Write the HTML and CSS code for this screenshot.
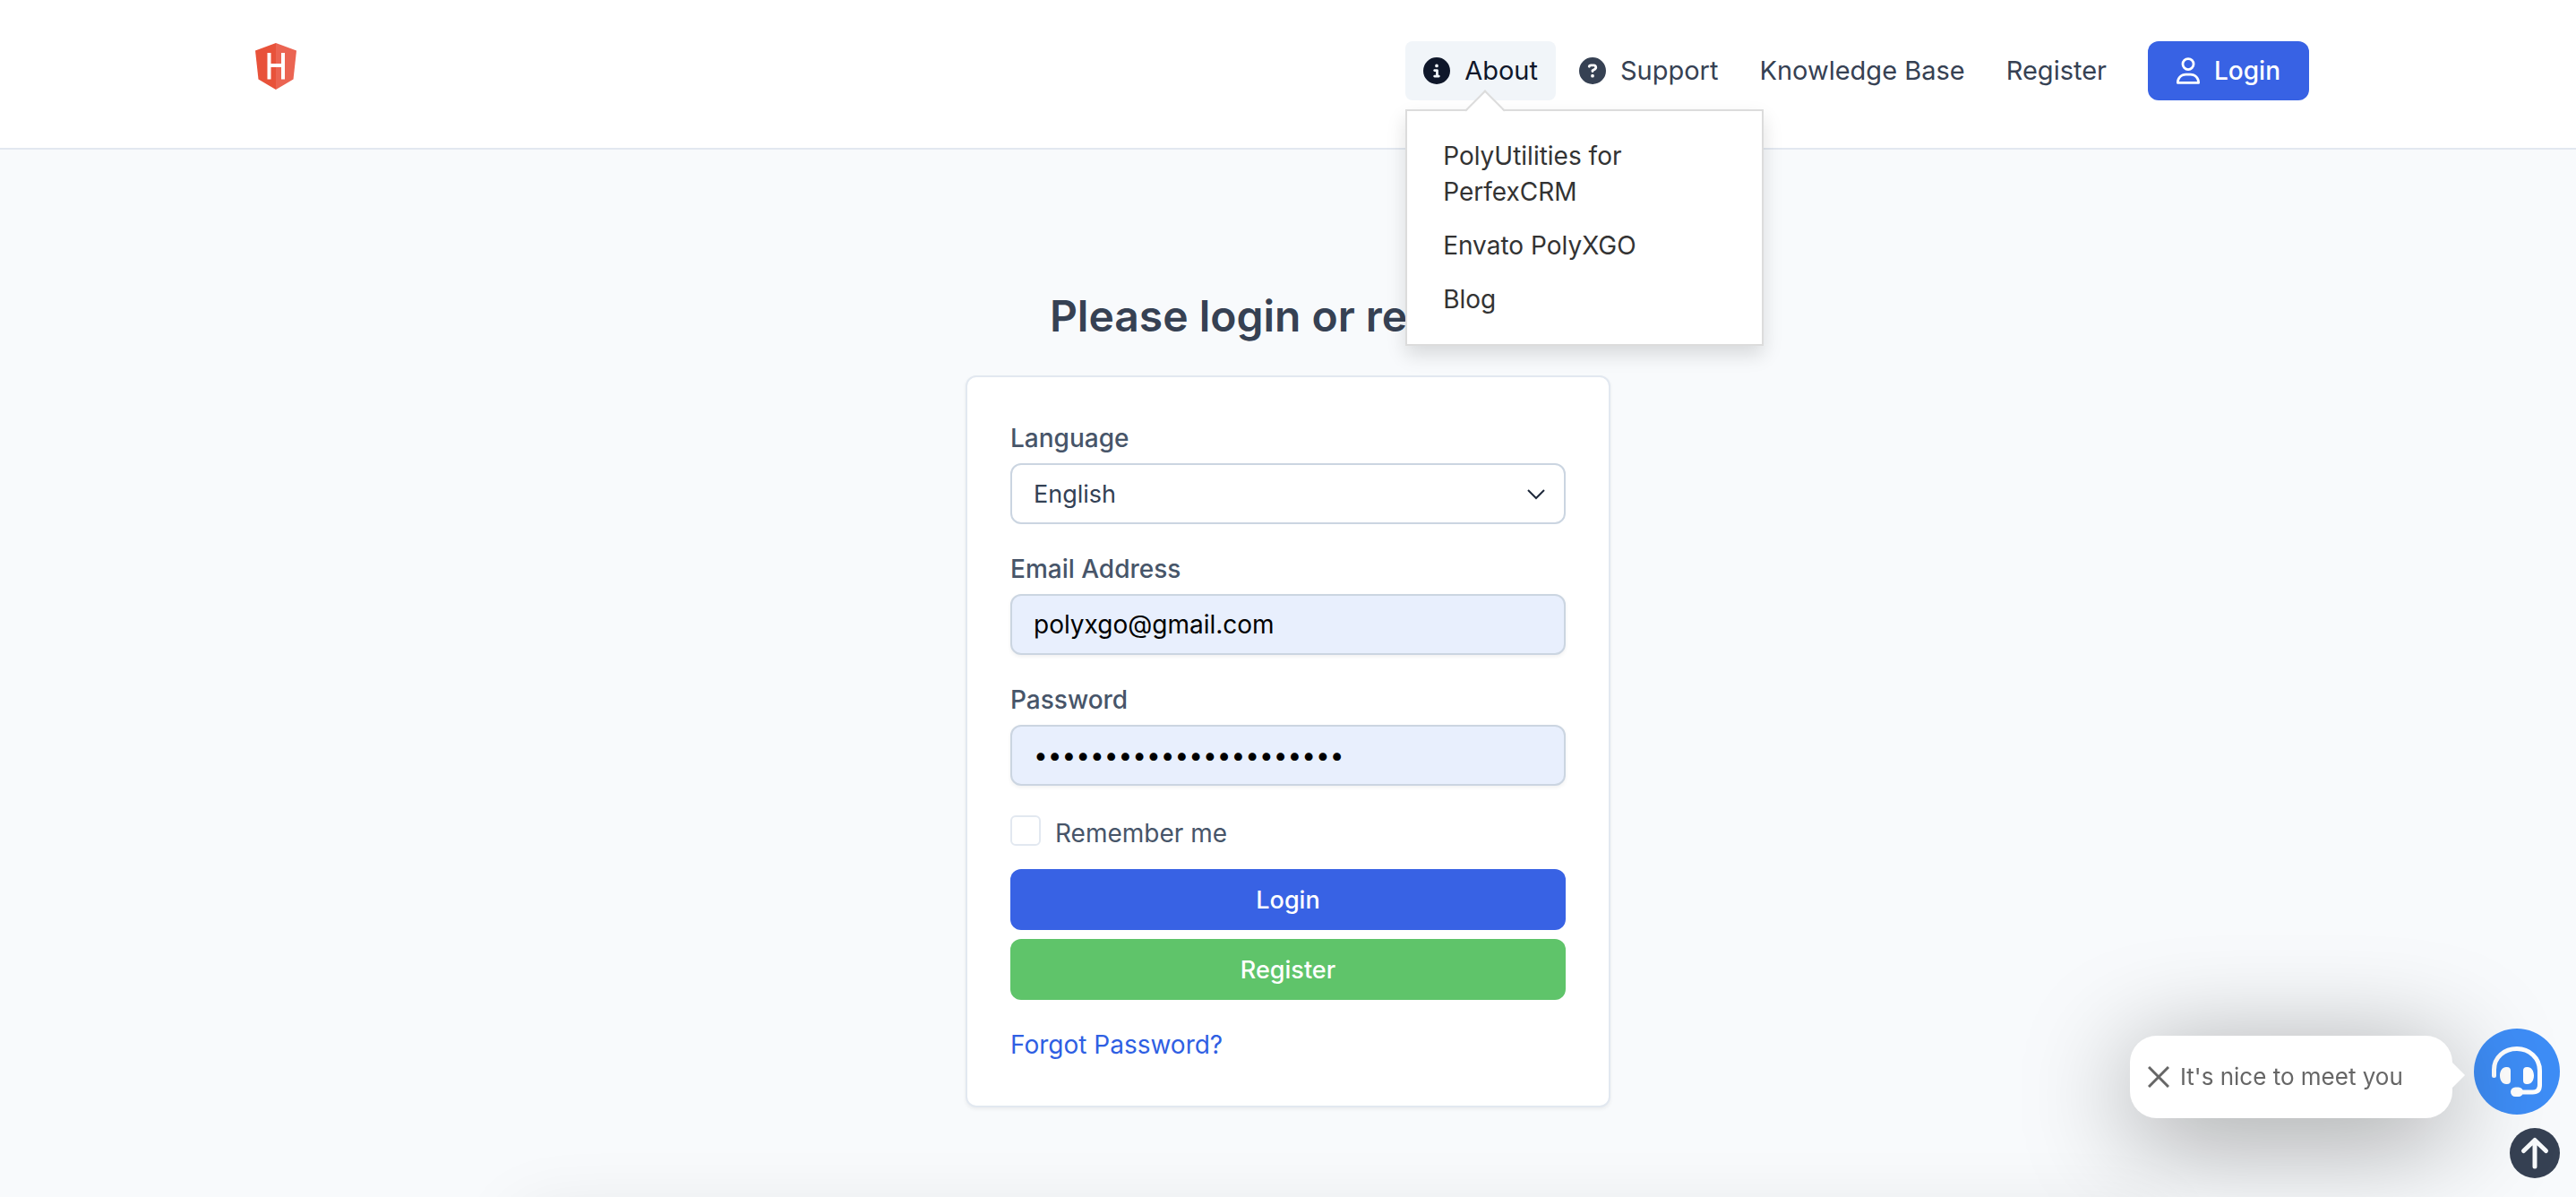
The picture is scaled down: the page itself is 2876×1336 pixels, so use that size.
FILE: index.html
```
<!DOCTYPE html>
<html lang="en">
<head>
    <meta charset="UTF-8">
    <meta name="viewport" content="width=device-width, initial-scale=1.0">
    <title>Login</title>
    <link rel="stylesheet" href="styles.css">
</head>
<body>
    <header class="header">
        <div class="container">
            <a href="#" class="logo" aria-label="Home">
                <svg viewBox="0 0 46 52" width="46" height="52">
                    <path fill="#e8523a" d="M23 0 0 8.500 3.500 40.500 23 52z"/>
                    <path fill="#eb6452" d="M23 0 46 8.500 42.500 40.500 23 52z"/>
                    <path fill="none" stroke="#fff" stroke-width="4" d="M15.500 11v29.500M31 11v29.500M15.500 25h15.500"/>
                </svg>
            </a>
            <nav>
                <ul class="menu">
                    <li class="menu-item">
                        <a href="#" class="menu-link active">
                            <svg viewBox="0 0 512 512" width="30" height="30"><path fill="currentColor" d="M256 512A256 256 0 1 0 256 0a256 256 0 1 0 0 512zM216 336h24V272H216c-13.300 0-24-10.700-24-24s10.700-24 24-24h48c13.300 0 24 10.700 24 24v88h8c13.300 0 24 10.700 24 24s-10.700 24-24 24H216c-13.300 0-24-10.700-24-24s10.700-24 24-24zm40-208a32 32 0 1 1 0 64 32 32 0 1 1 0-64z"/></svg>
                            About
                        </a>
                        <ul class="dropdown">
                            <li><a href="#">PolyUtilities for PerfexCRM</a></li>
                            <li><a href="#">Envato PolyXGO</a></li>
                            <li><a href="#">Blog</a></li>
                        </ul>
                    </li>
                    <li class="menu-item">
                        <a href="#" class="menu-link">
                            <svg viewBox="0 0 512 512" width="30" height="30"><path fill="currentColor" d="M256 512A256 256 0 1 0 256 0a256 256 0 1 0 0 512zM169.800 165.300c7.900-22.300 29.100-37.300 52.800-37.300h58.300c34.900 0 63.100 28.300 63.100 63.100c0 22.600-12.100 43.500-31.700 54.800L280 264.400c-.2 13-10.900 23.600-24 23.600c-13.300 0-24-10.700-24-24V250.500c0-8.600 4.600-16.500 12.100-20.800l44.300-25.400c4.700-2.700 7.600-7.700 7.600-13.100c0-8.400-6.800-15.100-15.100-15.100H222.600c-3.400 0-6.400 2.100-7.500 5.300l-.4 1.200c-4.400 12.500-18.200 19-30.600 14.600s-19-18.200-14.600-30.600l.4-1.200zM224 352a32 32 0 1 1 64 0 32 32 0 1 1 -64 0z"/></svg>
                            Support
                        </a>
                    </li>
                    <li class="menu-item"><a href="#" class="menu-link">Knowledge Base</a></li>
                    <li class="menu-item"><a href="#" class="menu-link">Register</a></li>
                    <li class="menu-item">
                        <a href="#" class="menu-login">
                            <svg viewBox="0 0 448 512" width="26" height="30"><path fill="currentColor" d="M304 128a80 80 0 1 0 -160 0 80 80 0 1 0 160 0zM96 128a128 128 0 1 1 256 0A128 128 0 1 1 96 128zM49.300 464H398.700c-8.900-63.300-63.300-112-129-112H178.300c-65.700 0-120.100 48.700-129 112zM0 482.300C0 383.800 79.800 304 178.300 304h91.400C368.200 304 448 383.800 448 482.300c0 16.400-13.300 29.700-29.700 29.700H29.700C13.300 512 0 498.700 0 482.300z"/></svg>
                            Login
                        </a>
                    </li>
                </ul>
            </nav>
        </div>
    </header>

    <main class="main">
        <h1 class="title">Please login or register</h1>
        <form class="card">
            <div class="form-group">
                <label for="language">Language</label>
                <div class="select-wrap">
                    <select id="language" class="form-control">
                        <option selected>English</option>
                    </select>
                    <svg class="chevron" viewBox="0 0 20 12" width="20" height="12"><path fill="none" stroke="#1e293b" stroke-width="2" d="M1 1l9 9 9-9"/></svg>
                </div>
            </div>
            <div class="form-group">
                <label for="email">Email Address</label>
                <input type="email" id="email" class="form-control filled" value="polyxgo@gmail.com">
            </div>
            <div class="form-group">
                <label for="password">Password</label>
                <input type="password" id="password" class="form-control filled" value="abcdefghijklmnopqrstuv">
            </div>
            <div class="remember">
                <input type="checkbox" id="remember">
                <label for="remember">Remember me</label>
            </div>
            <div class="actions">
                <button type="submit" class="btn btn-primary">Login</button>
                <button type="button" class="btn btn-success">Register</button>
            </div>
            <a href="#" class="forgot">Forgot Password?</a>
        </form>
    </main>

    <div class="bottom-shade"></div>

    <!-- Chat widget and back to top -->
    <div class="widgets">
        <div class="chat">
            <div class="chat-bubble">
                <button type="button" class="chat-close" aria-label="Close">
                    <svg viewBox="0 0 24 24" width="24" height="24"><path fill="none" stroke="#666" stroke-width="3" d="M1 1l22 22M23 1 1 23"/></svg>
                </button>
                <span>It's nice to meet you</span>
            </div>
            <button type="button" class="chat-open" aria-label="Open chat">
                <svg viewBox="0 0 96 96" width="96" height="96">
                    <path fill="none" stroke="#fff" stroke-width="5" stroke-linecap="round" stroke-linejoin="round" d="M22.500 52.500V46C22.500 32 34 22.500 48 22.500S73.500 33 73.500 47v16q0 8-8 8H50"/>
                    <path fill="#fff" d="M37 43h-1c-4 0-7 4-7 9.500s3 9.500 7 9.500h1q4 0 4-4V47q0-4-4-4zM59 43h1c4 0 7 4 7 9.500s-3 9.500-7 9.500h-1q-4 0-4-4V47q0-4 4-4z"/>
                    <rect fill="#fff" x="41" y="65.500" width="14" height="10.500" rx="5.200"/>
                </svg>
            </button>
        </div>
        <button type="button" class="to-top" aria-label="Back to top">
            <svg viewBox="0 0 56 56" width="56" height="56"><path fill="none" stroke="#f8fafc" stroke-width="5" stroke-linecap="round" stroke-linejoin="round" d="M28 43V13.500M15.500 25.500 28 13.500l12.500 12"/></svg>
        </button>
    </div>
</body>
</html>
```
FILE: styles.css
```
* {
    box-sizing: border-box;
}

body {
    margin: 0;
    min-height: 100vh;
    font-family: Inter, sans-serif;
    font-size: 28px;
    line-height: 40px;
    color: #364153;
    background-color: #f8fafc;
}

a {
    color: inherit;
    text-decoration: none;
}

button {
    border: none;
    padding: 0;
    font-family: inherit;
    cursor: pointer;
}

svg {
    display: block;
    flex-shrink: 0;
}

/* Header */
.header {
    background: #fff;
    border-bottom: 2px solid #e2e8f0;
}

.container {
    display: flex;
    justify-content: space-between;
    align-items: flex-start;
    max-width: 2340px;
    margin: 0 auto;
    padding: 46px 30px 53px 17px;
}

.logo {
    padding-top: 2px;
}

.menu {
    display: flex;
    gap: 6px;
    margin: 0;
    padding: 0;
    list-style: none;
}

.menu-item {
    position: relative;
}

.menu-link {
    display: flex;
    align-items: center;
    gap: 16px;
    height: 66px;
    padding: 0 20px;
    font-size: 29px;
    border-radius: 8px;
}

.menu-link.active {
    color: #0f172a;
    background: #f1f5f9;
}

.menu-login {
    display: flex;
    align-items: center;
    gap: 16px;
    height: 66px;
    margin-left: 20px;
    padding: 0 32px;
    border-radius: 12px;
    font-weight: 500;
    color: #fff;
    background: #3862e4;
}

.dropdown {
    position: absolute;
    top: 76px;
    left: 0;
    z-index: 10;
    width: 400px;
    margin: 0;
    padding: 20px;
    list-style: none;
    color: #333;
    background: #fff;
    border: 2px solid #dcdcdc;
    box-shadow: 0 10px 20px rgba(0, 0, 0, 0.13);
}

.dropdown::before {
    content: "";
    position: absolute;
    top: -17px;
    left: 71px;
    width: 30px;
    height: 30px;
    background: linear-gradient(135deg, #fff 50%, transparent 50%);
    border-top: 2px solid #dcdcdc;
    border-left: 2px solid #dcdcdc;
    transform: rotate(45deg);
}

.dropdown a {
    display: block;
    padding: 10px 20px;
}

/* Login form */
.main {
    max-width: 720px;
    margin: 0 auto;
    padding-top: 154px;
}

.title {
    margin: 0 0 34px;
    font-size: 48px;
    font-weight: 600;
    line-height: 64px;
    text-align: center;
}

.card {
    padding: 48px;
    background: #fff;
    border: 2px solid #e2e8f0;
    border-radius: 12px;
    box-shadow: 0 2px 4px rgba(0, 0, 0, 0.06);
}

.form-group {
    margin-bottom: 30px;
}

.form-group label {
    display: block;
    margin-bottom: 8px;
    font-weight: 500;
    color: #475569;
}

.form-control {
    display: block;
    width: 100%;
    height: 68px;
    padding: 0 24px;
    font-family: inherit;
    font-size: 28px;
    color: #334155;
    background: #fff;
    border: 2px solid #cbd5e1;
    border-radius: 12px;
    appearance: none;
}

select.form-control {
    font-size: 27px;
}

.form-control.filled {
    color: #000;
    background: #e8effd;
    box-shadow: 0 2px 4px rgba(0, 0, 0, 0.06);
}

.select-wrap {
    position: relative;
}

.chevron {
    position: absolute;
    top: 29px;
    right: 23px;
    pointer-events: none;
}

.remember {
    display: flex;
    align-items: flex-start;
    gap: 16px;
    margin-bottom: 20px;
    padding-top: 3px;
    color: #475569;
}

.remember input {
    width: 34px;
    height: 34px;
    margin: 0;
    background: #fff;
    border: 2px solid #e2e8f0;
    border-radius: 6px;
    appearance: none;
}

.actions {
    display: flex;
    flex-direction: column;
    gap: 10px;
    margin-bottom: 30px;
}

.btn {
    height: 68px;
    font-size: 27px;
    font-weight: 500;
    color: #fff;
    border-radius: 12px;
}

.btn-primary {
    background: #3862e4;
}

.btn-success {
    background: #5fc46a;
}

.forgot {
    display: block;
    color: #2f5fe3;
}

/* Soft shade along the bottom edge */
.bottom-shade {
    position: fixed;
    left: 20%;
    right: 16%;
    bottom: -80px;
    height: 60px;
    border-radius: 30px;
    box-shadow: 0 0 80px rgba(0, 0, 0, 0.1);
}

/* Floating widgets */
.widgets {
    position: fixed;
    right: 18px;
    bottom: 21px;
    display: flex;
    flex-direction: column;
    align-items: flex-end;
    gap: 11px;
}

.chat {
    display: flex;
    align-items: flex-start;
    gap: 24px;
}

.chat-bubble {
    position: relative;
    display: flex;
    align-items: center;
    gap: 12px;
    width: 360px;
    height: 92px;
    margin-top: 8px;
    padding: 0 20px;
    font-size: 26px;
    color: #666;
    background: #fff;
    border-radius: 30px;
    box-shadow: 0 20px 120px rgba(0, 0, 0, 0.4);
}

.chat-bubble::after {
    content: "";
    position: absolute;
    top: 30px;
    right: -14px;
    border: 14px solid transparent;
    border-right: none;
    border-left-color: #fff;
}

.chat-close {
    background: none;
}

.chat-open {
    background: #3e8df6;
    border-radius: 50%;
}

.to-top {
    background: #364153;
    border-radius: 50%;
}
```
